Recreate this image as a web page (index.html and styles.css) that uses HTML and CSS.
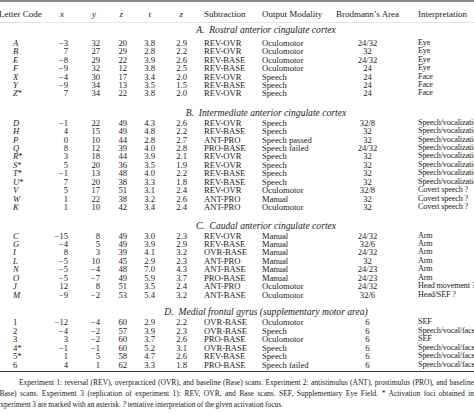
FILE: index.html
```html
<!DOCTYPE html>
<html>
<head>
<meta charset="utf-8">
<link rel="stylesheet" href="styles.css">
</head>
<body>
<div class="page">
  <div class="rule-top"></div>
  <div class="row head">
    <div class="code-h">Letter Code</div>
    <div class="nh"><i>x</i></div>
    <div class="nh"><i>y</i></div>
    <div class="nh"><i>z</i></div>
    <div class="nh"><i>t</i></div>
    <div class="nh"><i>z</i></div>
    <div class="sub">Subtraction</div>
    <div class="out">Output Modality</div>
    <div class="ba">Brodmann’s Area</div>
    <div class="int-h">Interpretation</div>
  </div>
  <div class="rule-faint"></div>

  <div class="section sec-a">
    <div class="title">A.&nbsp; Rostral anterior cingulate cortex</div>
    <div class="row"><div class="code"><i>A</i></div><div class="n">−3</div><div class="n">32</div><div class="n">20</div><div class="n">3.8</div><div class="n">2.9</div><div class="sub">REV-OVR</div><div class="out">Oculomotor</div><div class="ba">24/32</div><div class="int">Eye</div></div>
    <div class="row"><div class="code"><i>B</i></div><div class="n">7</div><div class="n">27</div><div class="n">29</div><div class="n">2.8</div><div class="n">2.2</div><div class="sub">REV-OVR</div><div class="out">Oculomotor</div><div class="ba">32</div><div class="int">Eye</div></div>
    <div class="row"><div class="code"><i>E</i></div><div class="n">−8</div><div class="n">29</div><div class="n">22</div><div class="n">3.9</div><div class="n">2.6</div><div class="sub">REV-BASE</div><div class="out">Oculomotor</div><div class="ba">24/32</div><div class="int">Eye</div></div>
    <div class="row"><div class="code"><i>F</i></div><div class="n">−9</div><div class="n">32</div><div class="n">12</div><div class="n">3.8</div><div class="n">2.5</div><div class="sub">REV-BASE</div><div class="out">Oculomotor</div><div class="ba">24</div><div class="int">Eye</div></div>
    <div class="row"><div class="code"><i>X</i></div><div class="n">−4</div><div class="n">30</div><div class="n">17</div><div class="n">3.4</div><div class="n">2.0</div><div class="sub">REV-OVR</div><div class="out">Speech</div><div class="ba">24</div><div class="int">Face</div></div>
    <div class="row"><div class="code"><i>Y</i></div><div class="n">−9</div><div class="n">34</div><div class="n">13</div><div class="n">3.5</div><div class="n">1.5</div><div class="sub">REV-BASE</div><div class="out">Speech</div><div class="ba">24</div><div class="int">Face</div></div>
    <div class="row"><div class="code"><i>Z</i>*</div><div class="n">7</div><div class="n">34</div><div class="n">22</div><div class="n">3.8</div><div class="n">2.0</div><div class="sub">REV-OVR</div><div class="out">Speech</div><div class="ba">24</div><div class="int">Face</div></div>
  </div>

  <div class="section sec-b">
    <div class="title">B.&nbsp; Intermediate anterior cingulate cortex</div>
    <div class="row"><div class="code"><i>D</i></div><div class="n">−1</div><div class="n">22</div><div class="n">49</div><div class="n">4.3</div><div class="n">2.6</div><div class="sub">REV-OVR</div><div class="out">Speech</div><div class="ba">32/8</div><div class="int">Speech/vocalization</div></div>
    <div class="row"><div class="code"><i>H</i></div><div class="n">4</div><div class="n">15</div><div class="n">49</div><div class="n">4.8</div><div class="n">2.2</div><div class="sub">REV-BASE</div><div class="out">Speech</div><div class="ba">32</div><div class="int">Speech/vocalization</div></div>
    <div class="row"><div class="code"><i>P</i></div><div class="n">0</div><div class="n">10</div><div class="n">44</div><div class="n">2.8</div><div class="n">2.7</div><div class="sub">ANT-PRO</div><div class="out">Speech passed</div><div class="ba">32</div><div class="int">Speech/vocalization</div></div>
    <div class="row"><div class="code"><i>Q</i></div><div class="n">8</div><div class="n">12</div><div class="n">39</div><div class="n">4.0</div><div class="n">2.8</div><div class="sub">PRO-BASE</div><div class="out">Speech failed</div><div class="ba">24/32</div><div class="int">Speech/vocalization</div></div>
    <div class="row"><div class="code"><i>R</i>*</div><div class="n">3</div><div class="n">18</div><div class="n">44</div><div class="n">3.9</div><div class="n">2.1</div><div class="sub">REV-OVR</div><div class="out">Speech</div><div class="ba">32</div><div class="int">Speech/vocalization</div></div>
    <div class="row"><div class="code"><i>S</i>*</div><div class="n">5</div><div class="n">20</div><div class="n">36</div><div class="n">3.5</div><div class="n">1.9</div><div class="sub">REV-OVR</div><div class="out">Speech</div><div class="ba">32</div><div class="int">Speech/vocalization</div></div>
    <div class="row"><div class="code"><i>T</i>*</div><div class="n">−1</div><div class="n">13</div><div class="n">48</div><div class="n">4.0</div><div class="n">2.2</div><div class="sub">REV-BASE</div><div class="out">Speech</div><div class="ba">32</div><div class="int">Speech/vocalization</div></div>
    <div class="row"><div class="code"><i>U</i>*</div><div class="n">7</div><div class="n">20</div><div class="n">38</div><div class="n">3.3</div><div class="n">1.8</div><div class="sub">REV-BASE</div><div class="out">Speech</div><div class="ba">32</div><div class="int">Speech/vocalization</div></div>
    <div class="row"><div class="code"><i>V</i></div><div class="n">5</div><div class="n">17</div><div class="n">51</div><div class="n">3.1</div><div class="n">2.4</div><div class="sub">REV-OVR</div><div class="out">Oculomotor</div><div class="ba">32/8</div><div class="int">Covert speech ?</div></div>
    <div class="row"><div class="code"><i>W</i></div><div class="n">1</div><div class="n">22</div><div class="n">38</div><div class="n">3.2</div><div class="n">2.6</div><div class="sub">ANT-PRO</div><div class="out">Manual</div><div class="ba">32</div><div class="int">Covert speech ?</div></div>
    <div class="row"><div class="code"><i>K</i></div><div class="n">1</div><div class="n">10</div><div class="n">42</div><div class="n">3.4</div><div class="n">2.4</div><div class="sub">ANT-PRO</div><div class="out">Oculomotor</div><div class="ba">32</div><div class="int">Covert speech ?</div></div>
  </div>

  <div class="section sec-c">
    <div class="title">C.&nbsp; Caudal anterior cingulate cortex</div>
    <div class="row"><div class="code"><i>C</i></div><div class="n">−15</div><div class="n">8</div><div class="n">49</div><div class="n">3.0</div><div class="n">2.3</div><div class="sub">REV-OVR</div><div class="out">Manual</div><div class="ba">24/32</div><div class="int">Arm</div></div>
    <div class="row"><div class="code"><i>G</i></div><div class="n">−4</div><div class="n">5</div><div class="n">49</div><div class="n">3.9</div><div class="n">2.9</div><div class="sub">REV-BASE</div><div class="out">Manual</div><div class="ba">32/6</div><div class="int">Arm</div></div>
    <div class="row"><div class="code"><i>I</i></div><div class="n">8</div><div class="n">3</div><div class="n">39</div><div class="n">4.1</div><div class="n">3.2</div><div class="sub">OVR-BASE</div><div class="out">Manual</div><div class="ba">24/32</div><div class="int">Arm</div></div>
    <div class="row"><div class="code"><i>L</i></div><div class="n">−5</div><div class="n">10</div><div class="n">45</div><div class="n">2.9</div><div class="n">2.3</div><div class="sub">ANT-PRO</div><div class="out">Manual</div><div class="ba">32</div><div class="int">Arm</div></div>
    <div class="row"><div class="code"><i>N</i></div><div class="n">−5</div><div class="n">−4</div><div class="n">48</div><div class="n">7.0</div><div class="n">4.3</div><div class="sub">ANT-BASE</div><div class="out">Manual</div><div class="ba">24/23</div><div class="int">Arm</div></div>
    <div class="row"><div class="code"><i>O</i></div><div class="n">−5</div><div class="n">−7</div><div class="n">49</div><div class="n">5.9</div><div class="n">3.7</div><div class="sub">PRO-BASE</div><div class="out">Manual</div><div class="ba">24/23</div><div class="int">Arm</div></div>
    <div class="row"><div class="code"><i>J</i></div><div class="n">12</div><div class="n">8</div><div class="n">51</div><div class="n">3.5</div><div class="n">2.4</div><div class="sub">ANT-PRO</div><div class="out">Oculomotor</div><div class="ba">24/32</div><div class="int">Head movement ?</div></div>
    <div class="row"><div class="code"><i>M</i></div><div class="n">−9</div><div class="n">−2</div><div class="n">53</div><div class="n">5.4</div><div class="n">3.2</div><div class="sub">ANT-BASE</div><div class="out">Oculomotor</div><div class="ba">32/6</div><div class="int">Head/SEF ?</div></div>
  </div>

  <div class="section sec-d">
    <div class="title">D.&nbsp; Medial frontal gyrus (supplementary motor area)</div>
    <div class="row"><div class="code">1</div><div class="n">−12</div><div class="n">−4</div><div class="n">60</div><div class="n">2.9</div><div class="n">2.2</div><div class="sub">OVR-BASE</div><div class="out">Oculomotor</div><div class="ba">6</div><div class="int">SEF</div></div>
    <div class="row"><div class="code">2</div><div class="n">−4</div><div class="n">−2</div><div class="n">57</div><div class="n">3.9</div><div class="n">2.3</div><div class="sub">OVR-BASE</div><div class="out">Speech</div><div class="ba">6</div><div class="int">Speech/vocal/face</div></div>
    <div class="row"><div class="code">3</div><div class="n">3</div><div class="n">−2</div><div class="n">60</div><div class="n">3.7</div><div class="n">2.6</div><div class="sub">PRO-BASE</div><div class="out">Oculomotor</div><div class="ba">6</div><div class="int">SEF</div></div>
    <div class="row"><div class="code">4*</div><div class="n">−1</div><div class="n">−1</div><div class="n">60</div><div class="n">5.2</div><div class="n">3.1</div><div class="sub">OVR-BASE</div><div class="out">Speech</div><div class="ba">6</div><div class="int">Speech/vocal/face</div></div>
    <div class="row"><div class="code">5*</div><div class="n">1</div><div class="n">5</div><div class="n">58</div><div class="n">4.7</div><div class="n">2.6</div><div class="sub">REV-BASE</div><div class="out">Speech</div><div class="ba">6</div><div class="int">Speech/vocal/face</div></div>
    <div class="row"><div class="code">6</div><div class="n">4</div><div class="n">1</div><div class="n">62</div><div class="n">3.3</div><div class="n">1.8</div><div class="sub">PRO-BASE</div><div class="out">Speech failed</div><div class="ba">6</div><div class="int">Speech/vocal/face</div></div>
  </div>

  <div class="rule-bottom"></div>
  <div class="notes">
    <div class="line first">Experiment 1: reversal (REV), overpracticed (OVR), and baseline (Base) scans. Experiment 2: antistimulus (ANT), prostimulus (PRO), and baseline</div>
    <div class="line mid">(Base) scans. Experiment 3 (replication of experiment 1): REV, OVR, and Base scans. SEF, Supplementary Eye Field. * Activation foci obtained in</div>
    <div class="line last">experiment 3 are marked with an asterisk. <i>?</i> tentative interpretation of the given activation focus.</div>
  </div>
</div>
</body>
</html>
```

FILE: styles.css
```css
html, body {
  margin: 0;
  padding: 0;
  background: #ffffff;
}

.page {
  width: 474px;
  height: 414px;
  overflow: hidden;
  font-family: "Liberation Serif", "Times New Roman", serif;
  font-size: 8.6px;
  color: #1b1b1b;
}

.rule-top {
  height: 2px;
  background: #8a8a8a;
}

.row {
  display: grid;
  grid-template-columns: 50px 22px 32px 27px 28px 32px 65px 74px 75px 69px;
  height: 8.45px;
  line-height: 8.45px;
  white-space: nowrap;
}

.head {
  margin-top: 7.8px;
  font-size: 9px;
}

.code-h {
  margin-left: -1px;
}

.nh {
  text-align: right;
  padding-right: 8px;
}

.code {
  padding-left: 13px;
}

.n {
  text-align: right;
  padding-right: 4px;
}

.sub {
  padding-left: 13px;
}

.out {
  padding-left: 6px;
}

.ba {
  text-align: center;
}

.int-h {
  padding-left: 13px;
}

.int {
  padding-left: 13px;
  font-size: 8.2px;
  letter-spacing: -0.15px;
}

.rule-faint {
  margin-top: 3.75px;
  height: 1px;
  background: #e6e6e6;
}

.title {
  font-style: italic;
  font-size: 9.6px;
  text-align: center;
  padding-left: 58px;
  height: 8.45px;
  line-height: 8.45px;
  margin-bottom: 1.55px;
  white-space: nowrap;
}

.sec-a .title {
  margin-top: 2.8px;
  margin-bottom: 4.6px;
}

.sec-b .title {
  margin-top: 10.85px;
}

.sec-c .title {
  margin-top: 10.05px;
}

.sec-d .title {
  margin-top: 9.4px;
}

.rule-bottom {
  margin-top: 2px;
  height: 1px;
  background: #3a3a3a;
}

.notes {
  margin-top: 4.5px;
  margin-left: -3px;
  width: 477px;
  font-size: 7.5px;
  line-height: 11px;
  word-spacing: -0.3px;
}

.line {
  white-space: nowrap;
}

.line.first {
  padding-left: 22px;
  text-align: justify;
  text-align-last: justify;
  white-space: normal;
}

.line.mid {
  text-align: justify;
  text-align-last: justify;
  white-space: normal;
}
```
